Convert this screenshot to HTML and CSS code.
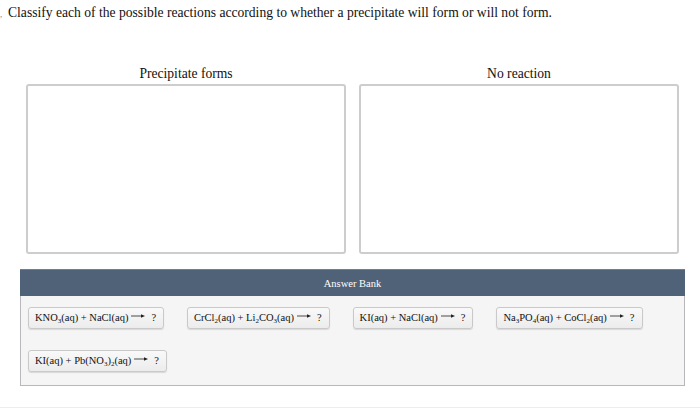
FILE: index.html
```html
<!DOCTYPE html>
<html>
<head>
<meta charset="utf-8">
<link rel="stylesheet" href="styles.css">
</head>
<body>
<div class="page">
  <p class="prompt"><span class="mark">,</span>Classify each of the possible reactions according to whether a precipitate will form or will not form.</p>
  <div class="bins">
    <div class="bin">
      <div class="bin-title">Precipitate forms</div>
      <div class="bin-box"></div>
    </div>
    <div class="bin">
      <div class="bin-title">No reaction</div>
      <div class="bin-box"></div>
    </div>
  </div>
  <div class="bank">
    <div class="bank-head">Answer Bank</div>
    <div class="bank-body">
      <div class="chip">KNO<sub>3</sub>(aq) + NaCl(aq)<svg class="arr" viewBox="0 0 14 6"><line x1="0" y1="3" x2="10.5" y2="3" stroke="#222" stroke-width="0.8"/><path d="M10 1.2 L14 3 L10 4.8 Z" fill="#222"/></svg>?</div>
      <div class="chip">CrCl<sub>2</sub>(aq) + Li<sub>2</sub>CO<sub>3</sub>(aq)<svg class="arr" viewBox="0 0 14 6"><line x1="0" y1="3" x2="10.5" y2="3" stroke="#222" stroke-width="0.8"/><path d="M10 1.2 L14 3 L10 4.8 Z" fill="#222"/></svg>?</div>
      <div class="chip">KI(aq) + NaCl(aq)<svg class="arr" viewBox="0 0 14 6"><line x1="0" y1="3" x2="10.5" y2="3" stroke="#222" stroke-width="0.8"/><path d="M10 1.2 L14 3 L10 4.8 Z" fill="#222"/></svg>?</div>
      <div class="chip">Na<sub>3</sub>PO<sub>4</sub>(aq) + CoCl<sub>2</sub>(aq)<svg class="arr" viewBox="0 0 14 6"><line x1="0" y1="3" x2="10.5" y2="3" stroke="#222" stroke-width="0.8"/><path d="M10 1.2 L14 3 L10 4.8 Z" fill="#222"/></svg>?</div>
      <div class="chip">KI(aq) + Pb(NO<sub>3</sub>)<sub>2</sub>(aq)<svg class="arr" viewBox="0 0 14 6"><line x1="0" y1="3" x2="10.5" y2="3" stroke="#222" stroke-width="0.8"/><path d="M10 1.2 L14 3 L10 4.8 Z" fill="#222"/></svg>?</div>
    </div>
  </div>
  <div class="footer-line"></div>
</div>
</body>
</html>
```

FILE: styles.css
```css
html, body {
  margin: 0;
  padding: 0;
  background: #ffffff;
}
body {
  font-family: "Liberation Serif", "Times New Roman", serif;
  color: #111;
  width: 700px;
  height: 410px;
  overflow: hidden;
}
.page {
  display: flex;
  flex-direction: column;
}
.prompt {
  margin: 5px 0 0 0;
  font-size: 13.6px;
  line-height: 16px;
  white-space: nowrap;
}
.mark {
  display: inline-block;
  width: 8px;
  color: #888;
  font-size: 9px;
}
.bins {
  display: flex;
  gap: 13px;
  margin-top: 44px;
  padding-left: 26px;
}
.bin {
  width: 320px;
  display: flex;
  flex-direction: column;
  align-items: center;
}
.bin-title {
  font-size: 13.6px;
  line-height: 16px;
  height: 18px;
}
.bin-box {
  align-self: stretch;
  height: 166px;
  border: 2px solid #cdcdcd;
  border-radius: 3px;
  background: #fff;
}
.bank {
  margin: 15px 0 0 20px;
  width: 665px;
  display: flex;
  flex-direction: column;
}
.bank-head {
  background: #4f6278;
  color: #fff;
  font-size: 10.5px;
  text-align: center;
  height: 26px;
  line-height: 27px;
  border-top: 1px solid #6d7f93;
}
.bank-body {
  background: #f5f5f6;
  border: 1px solid #b8b8bc;
  border-top: none;
  height: 90px;
  box-sizing: border-box;
  display: flex;
  flex-wrap: wrap;
  align-content: flex-start;
  column-gap: 23px;
  row-gap: 21px;
  padding: 11px 0 0 7px;
}
.chip {
  height: 22px;
  box-sizing: border-box;
  padding: 0 7px 0 6px;
  border: 1px solid #c9c9c9;
  border-radius: 3px;
  background: linear-gradient(#f9f9f9, #ececec);
  box-shadow: 0 1px 1px rgba(0,0,0,0.12);
  font-size: 10.5px;
  line-height: 20px;
  white-space: nowrap;
  color: #111;
}
.chip sub {
  font-size: 7px;
  line-height: 0;
  vertical-align: -2px;
}
.arr {
  width: 14px;
  height: 6px;
  margin: 0 6px 0 3px;
  vertical-align: 2px;
}
.footer-line {
  margin-top: 21px;
  height: 1px;
  background: #ececec;
}
```
